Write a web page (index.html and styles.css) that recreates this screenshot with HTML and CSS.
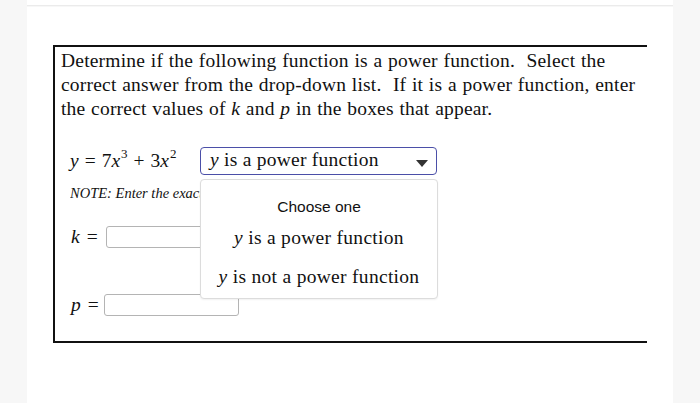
FILE: index.html
```html
<!DOCTYPE html>
<html lang="en">
<head>
<meta charset="utf-8">
<title>Power function question</title>
<link rel="stylesheet" href="styles.css">
</head>
<body>
<div class="page">
  <div class="prev-card"></div>
  <div class="card">
    <div class="question">
      <p class="prompt">Determine if the following function is a power function.&nbsp; Select the correct answer from the drop-down list.&nbsp; If it is a power function, enter the correct values of <i>k</i> and <i>p</i> in the boxes that appear.</p>
      <div class="eq-row">
        <span class="eq"><i>y</i><span class="op">=</span>7<i>x</i><sup>3</sup><span class="op">+</span>3<i>x</i><sup>2</sup></span>
        <div class="select-wrap">
          <div class="select">
            <span class="select-text"><i>y</i> is a power function</span>
            <span class="arrow"></span>
          </div>
          <div class="menu">
            <div class="menu-head">Choose one</div>
            <div class="menu-item"><i>y</i> is a power function</div>
            <div class="menu-item"><i>y</i> is not a power function</div>
          </div>
        </div>
      </div>
      <p class="note">NOTE: Enter the exact answers.</p>
      <div class="field-row k-row">
        <span class="label"><i>k</i><span class="op">=</span></span>
        <span class="input"></span>
      </div>
      <div class="field-row p-row">
        <span class="label label-p"><i>p</i><span class="op">=</span></span>
        <span class="input input-p"></span>
      </div>
    </div>
  </div>
</div>
</body>
</html>
```

FILE: styles.css
```css
html, body {
  margin: 0;
  padding: 0;
}
body {
  background: #f7f7f7;
  width: 700px;
  height: 403px;
  overflow: hidden;
}
.page {
  margin-left: 27px;
  width: 646px;
}
.prev-card {
  height: 5px;
  background: #ffffff;
  border-bottom: 1px solid #ebebeb;
}
.card {
  margin-top: 1px;
  background: #ffffff;
  height: 400px;
  padding-top: 38px;
  box-sizing: border-box;
}
.question {
  margin-left: 26px;
  width: 594px;
  height: 298px;
  box-sizing: border-box;
  border-top: 2px solid #111;
  border-left: 2px solid #111;
  border-bottom: 2px solid #111;
  font-family: "Liberation Serif", "Times New Roman", serif;
  color: #111;
}
.prompt {
  margin: 0;
  padding: 2px 0 0 6px;
  font-size: 19.5px;
  line-height: 24px;
  letter-spacing: 0.2px;
  word-spacing: 0.6px;
}
.eq-row {
  display: flex;
  align-items: center;
  margin-top: 26px;
  padding-left: 15px;
  height: 28px;
}
.eq {
  font-size: 19.5px;
  width: 130px;
  white-space: nowrap;
}
.op {
  padding: 0 6px;
}
.eq sup {
  font-size: 13px;
  vertical-align: 9px;
  line-height: 0;
  padding-left: 1px;
}
.select-wrap {
  position: relative;
}
.select {
  width: 237px;
  height: 28px;
  box-sizing: border-box;
  border: 1px solid #4b4fa8;
  border-radius: 4px;
  display: flex;
  align-items: center;
  justify-content: space-between;
  padding: 0 8px 0 9px;
  font-size: 19.5px;
  letter-spacing: 0.25px;
  background: #fff;
}
.select-text {
  margin-top: -3px;
}
.arrow {
  width: 0;
  height: 0;
  border-left: 6px solid transparent;
  border-right: 6px solid transparent;
  border-top: 7px solid #333;
  margin-top: 4px;
}
.menu {
  position: absolute;
  top: 32px;
  left: 0;
  width: 238px;
  height: 120px;
  box-sizing: border-box;
  background: #fff;
  border: 1px solid #dcdcdc;
  border-radius: 4px;
  box-shadow: 0 1px 2px rgba(0, 0, 0, 0.06);
  text-align: center;
  z-index: 2;
  padding-top: 17px;
}
.menu-head {
  font-family: "Liberation Sans", Arial, sans-serif;
  font-size: 15.5px;
  line-height: 20px;
}
.menu-item {
  font-size: 19.5px;
  letter-spacing: 0.3px;
  line-height: 24px;
  margin-top: 9px;
}
.menu-item + .menu-item {
  margin-top: 15px;
}
.note {
  margin: 9px 0 0 15px;
  font-size: 14.5px;
  font-style: italic;
  line-height: 18px;
  white-space: nowrap;
  overflow: hidden;
  width: 130px;
}
.field-row {
  display: flex;
  align-items: center;
  padding-left: 16px;
  height: 22px;
}
.k-row {
  margin-top: 24px;
}
.p-row {
  margin-top: 46px;
}
.label {
  font-size: 19.5px;
  margin-right: 6px;
  white-space: nowrap;
}
.label-p {
  margin-right: 3px;
}
.label .op {
  padding: 0 2px 0 7px;
}
.input {
  display: block;
  width: 133px;
  height: 22px;
  box-sizing: border-box;
  border: 1px solid #b4b4b4;
  border-radius: 3px;
  background: #fff;
}
.input-p {
  width: 135px;
}
```
